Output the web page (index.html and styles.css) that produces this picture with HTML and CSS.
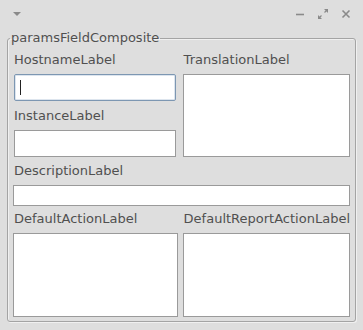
FILE: index.html
```html
<!DOCTYPE html>
<html lang="en">

<head>
    <meta charset="UTF-8" />
    <meta name="viewport" content="width=device-width, initial-scale=1.0" />
    <title>paramsFieldComposite</title>
    <link rel="stylesheet" href="styles.css">
</head>

<body>

    <div class="window">
        <div class="titlebar">
            <svg class="menu-arrow" width="8" height="5" viewBox="0 0 8 5">
                <path d="M0 0 L8 0 L4 4 Z" fill="#8a8a8a" />
            </svg>
            <div class="controls">
                <svg width="10" height="10" viewBox="0 0 10 10">
                    <path d="M1 5.5 H9" stroke="#8a8a8a" stroke-width="1.6" />
                </svg>
                <svg width="12" height="12" viewBox="0 0 12 12">
                    <path d="M7 1 H11 V5 Z M1 7 V11 H5 Z" fill="#8a8a8a" />
                    <path d="M10 2 L7.5 4.5 M2 10 L4.5 7.5" stroke="#8a8a8a" stroke-width="1.2" />
                </svg>
                <svg width="10" height="10" viewBox="0 0 10 10">
                    <path d="M1.5 1.5 L8.5 8.5 M8.5 1.5 L1.5 8.5" stroke="#8a8a8a" stroke-width="1.6" />
                </svg>
            </div>
        </div>

        <fieldset class="group">
            <legend>paramsFieldComposite</legend>
            <div class="form">
                <label class="lbl host-lbl">HostnameLabel</label>
                <label class="lbl trans-lbl">TranslationLabel</label>
                <div class="field host focused"><span class="caret"></span></div>
                <div class="field area trans"></div>
                <label class="lbl inst-lbl">InstanceLabel</label>
                <div class="field inst"></div>
                <label class="lbl desc-lbl">DescriptionLabel</label>
                <div class="field desc"></div>
                <label class="lbl act-lbl">DefaultActionLabel</label>
                <label class="lbl rep-lbl">DefaultReportActionLabel</label>
                <div class="field area act"></div>
                <div class="field area rep"></div>
            </div>
        </fieldset>
    </div>

</body>

</html>
```

FILE: styles.css
```css
body {
    margin: 0;
    background: #dcdcdc;
    font-family: "DejaVu Sans", sans-serif;
    font-size: 12px;
    color: #505050;
}

.window {
    width: 363px;
    height: 330px;
    box-sizing: border-box;
    background: #dedede;
}

.titlebar {
    height: 30px;
    display: flex;
    align-items: center;
    justify-content: space-between;
    padding: 0 12px 2px 13px;
    box-sizing: border-box;
}

.controls {
    display: flex;
    align-items: center;
    gap: 12px;
}

.group {
    margin: 0 7px 0 7px;
    padding: 2px 5px 4px 5px;
    border: 1px solid #a4a4a4;
    border-radius: 3px;
    box-shadow: inset 1px 1px 0 #f0f0f0, 1px 1px 0 #f0f0f0;
    height: 292px;
    box-sizing: border-box;
}

.group legend {
    padding: 0 1px;
    margin-left: -3px;
    font-size: 13px;
    line-height: 16px;
}

.form {
    display: grid;
    grid-template-columns: 1fr 1fr;
    grid-template-rows: 26px 27px 29px 27px 28px 21px 27px 84px;
    column-gap: 5px;
}

.lbl {
    align-self: end;
    line-height: 16px;
    font-size: 13px;
    margin-bottom: 6px;
    padding-left: 1px;
    white-space: nowrap;
}

.field {
    background: #ffffff;
    border: 1px solid #9a9a9a;
    box-sizing: border-box;
}

.focused {
    border-color: #7d97b2;
    border-radius: 2px;
    box-shadow: inset 0 0 0 1px #dde5ee;
    display: flex;
    align-items: center;
    padding-left: 5px;
}

.caret {
    width: 1px;
    height: 15px;
    background: #222;
}

.host-lbl { grid-column: 1; grid-row: 1; }
.trans-lbl { grid-column: 2; grid-row: 1; }
.host { grid-column: 1; grid-row: 2; margin-left: 1px; margin-right: 2px; }
.trans { grid-column: 2; grid-row: 2 / 5; }
.inst-lbl { grid-column: 1; grid-row: 3; }
.inst { grid-column: 1; grid-row: 4; margin-left: 1px; margin-right: 2px; }
.desc-lbl { grid-column: 1 / 3; grid-row: 5; }
.desc { grid-column: 1 / 3; grid-row: 6; }
.act-lbl { grid-column: 1; grid-row: 7; }
.rep-lbl { grid-column: 2; grid-row: 7; }
.act { grid-column: 1; grid-row: 8; }
.rep { grid-column: 2; grid-row: 8; }
```
